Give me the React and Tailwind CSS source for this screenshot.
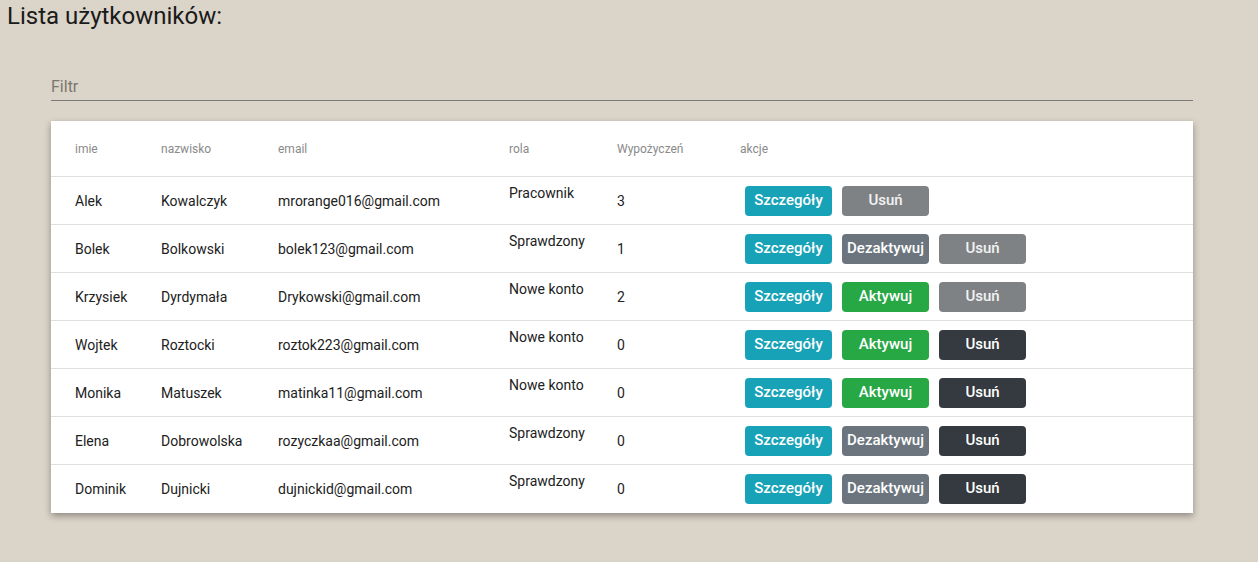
import React from "react";

const users = [
  { imie: "Alek", nazwisko: "Kowalczyk", email: "mrorange016@gmail.com", rola: "Pracownik", n: 3, akcje: ["info", "usunJasny"] },
  { imie: "Bolek", nazwisko: "Bolkowski", email: "bolek123@gmail.com", rola: "Sprawdzony", n: 1, akcje: ["info", "dezaktywuj", "usunJasny"] },
  { imie: "Krzysiek", nazwisko: "Dyrdymała", email: "Drykowski@gmail.com", rola: "Nowe konto", n: 2, akcje: ["info", "aktywuj", "usunJasny"] },
  { imie: "Wojtek", nazwisko: "Roztocki", email: "roztok223@gmail.com", rola: "Nowe konto", n: 0, akcje: ["info", "aktywuj", "usun"] },
  { imie: "Monika", nazwisko: "Matuszek", email: "matinka11@gmail.com", rola: "Nowe konto", n: 0, akcje: ["info", "aktywuj", "usun"] },
  { imie: "Elena", nazwisko: "Dobrowolska", email: "rozyczkaa@gmail.com", rola: "Sprawdzony", n: 0, akcje: ["info", "dezaktywuj", "usun"] },
  { imie: "Dominik", nazwisko: "Dujnicki", email: "dujnickid@gmail.com", rola: "Sprawdzony", n: 0, akcje: ["info", "dezaktywuj", "usun"] },
];

const buttons = {
  info: { label: "Szczegóły", cls: "bg-[#17a2b8] text-white" },
  dezaktywuj: { label: "Dezaktywuj", cls: "bg-[#6c757d] text-white" },
  aktywuj: { label: "Aktywuj", cls: "bg-[#28a745] text-white" },
  usunJasny: { label: "Usuń", cls: "bg-[#7f8285] text-white/90" },
  usun: { label: "Usuń", cls: "bg-[#343a40] text-white" },
};

const Btn = ({ kind }) => {
  const b = buttons[kind];
  return (
    <button className={"h-[30px] w-[87px] rounded-[4px] text-[15px] font-medium " + b.cls}>
      {b.label}
    </button>
  );
};

const App = () => {
  return (
    <div className="min-h-[562px] bg-[#dbd4c8] font-['Roboto',sans-serif] text-[#212121]">
      <h1 className="pl-[7px] pt-[2px] text-2xl leading-[28px] font-normal text-[#1a1a1a]">Lista użytkowników:</h1>

      <div className="mx-[51px] mt-[45px] w-[1142px] border-b border-[#7a7a7a] pb-[1px]">
        <input
          className="w-full bg-transparent text-base leading-[20px] outline-none placeholder:text-[#7b7670]"
          placeholder="Filtr"
        />
      </div>

      <div className="mx-[51px] mt-[20px] w-[1142px] bg-white shadow-[0_3px_7px_rgba(0,0,0,0.35)]">
        <div className="flex h-[56px] items-center border-b border-[#e0e0e0] pl-6 text-xs text-[#8a8a8a]">
          <div className="w-[86px]">imie</div>
          <div className="w-[117px]">nazwisko</div>
          <div className="w-[231px]">email</div>
          <div className="w-[108px]">rola</div>
          <div className="w-[123px]">Wypożyczeń</div>
          <div className="flex-1">akcje</div>
        </div>
        {users.map((u, i) => (
          <div
            key={u.imie}
            className={
              "flex h-[48px] items-center pl-6 text-sm " +
              (i < users.length - 1 ? "border-b border-[#e0e0e0]" : "")
            }
          >
            <div className="w-[86px]">{u.imie}</div>
            <div className="w-[117px]">{u.nazwisko}</div>
            <div className="w-[231px]">{u.email}</div>
            <div className="w-[108px] self-start pt-[6px]">{u.rola}</div>
            <div className="w-[123px]">{u.n}</div>
            <div className="flex flex-1 gap-[10px] pl-[5px]">
              {u.akcje.map((a, j) => (
                <Btn key={j} kind={a} />
              ))}
            </div>
          </div>
        ))}
      </div>
    </div>
  );
};

export default App;
